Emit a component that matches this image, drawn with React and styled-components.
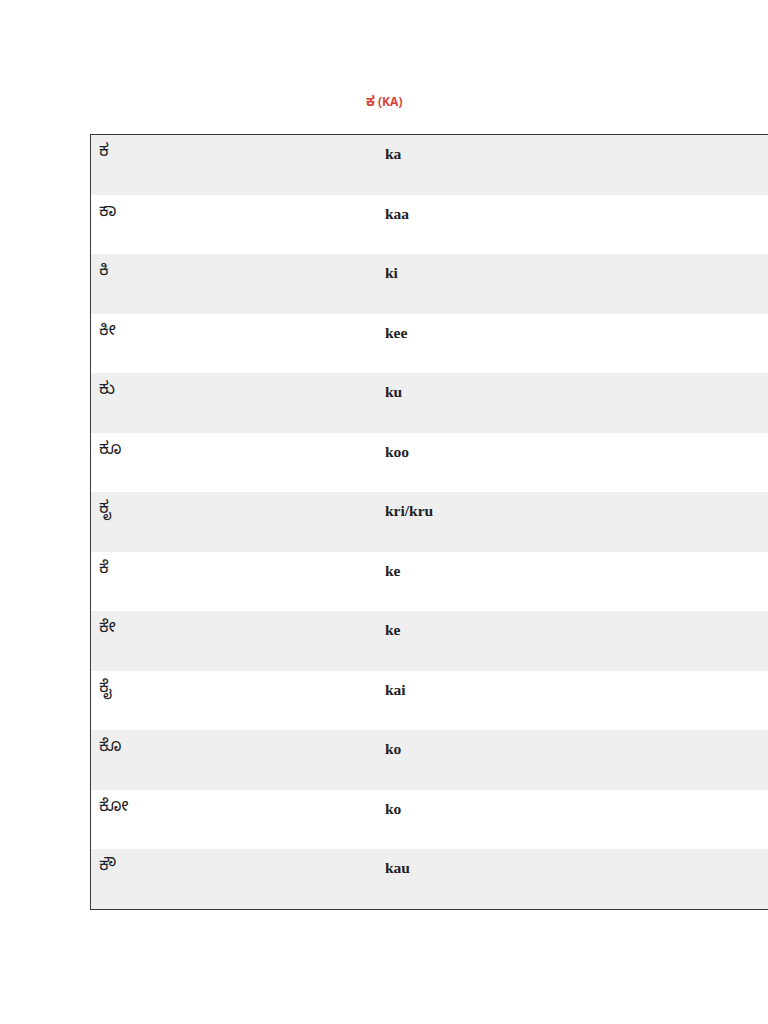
import React from 'react';
import styled, { createGlobalStyle } from 'styled-components';

const GlobalStyle = createGlobalStyle`
  html, body {
    margin: 0;
    padding: 0;
    background: #ffffff;
    overflow-x: hidden;
  }
`;

const Page = styled.div`
  width: 768px;
  padding-top: 93px;
  font-family: 'Noto Sans', 'Liberation Sans', sans-serif;
`;

const Title = styled.h3`
  margin: 0 0 20px 0;
  padding-left: 366px;
  font-size: 12px;
  line-height: 18px;
  font-weight: 700;
  color: #d9443f;
`;

const TitleGlyph = styled.span`
  font-family: 'Noto Sans Kannada', 'Noto Sans', sans-serif;
  font-size: 14px;
`;

const Table = styled.div`
  margin-left: 90px;
  width: 678px;
  border: 1px solid #3a3a3a;
  border-right: none;
`;

const Row = styled.div`
  display: grid;
  grid-template-columns: 287px 1fr;
  height: ${({ $tall }) => ($tall ? '60px' : '59px')};
  background: ${({ $shaded }) => ($shaded ? '#efefef' : '#ffffff')};
`;

const Cell = styled.div`
  padding: 9px 0 0 8px;
  font-size: 14px;
  line-height: 20px;
  color: #222222;
`;

const Letter = styled(Cell)`
  font-family: 'Noto Sans Kannada', 'Noto Sans', sans-serif;
  font-size: 17px;
`;

const Roman = styled(Cell)`
  padding-left: 7px;
  font-family: 'Liberation Serif', 'DejaVu Serif', serif;
  font-weight: 700;
  font-size: 15.5px;
`;

const rows = [
  ['ಕ', 'ka'],
  ['ಕಾ', 'kaa'],
  ['ಕಿ', 'ki'],
  ['ಕೀ', 'kee'],
  ['ಕು', 'ku'],
  ['ಕೂ', 'koo'],
  ['ಕೃ', 'kri/kru'],
  ['ಕೆ', 'ke'],
  ['ಕೇ', 'ke'],
  ['ಕೈ', 'kai'],
  ['ಕೊ', 'ko'],
  ['ಕೋ', 'ko'],
  ['ಕೌ', 'kau']
];

const App = () => (
  <Page>
    <GlobalStyle />
    <Title>
      <TitleGlyph>ಕ</TitleGlyph> (KA)
    </Title>
    <Table>
      {rows.map(([letter, roman], i) => (
        <Row key={i} $shaded={i % 2 === 0} $tall={i % 2 === 0}>
          <Letter>{letter}</Letter>
          <Roman>{roman}</Roman>
        </Row>
      ))}
    </Table>
  </Page>
);

export default App;
